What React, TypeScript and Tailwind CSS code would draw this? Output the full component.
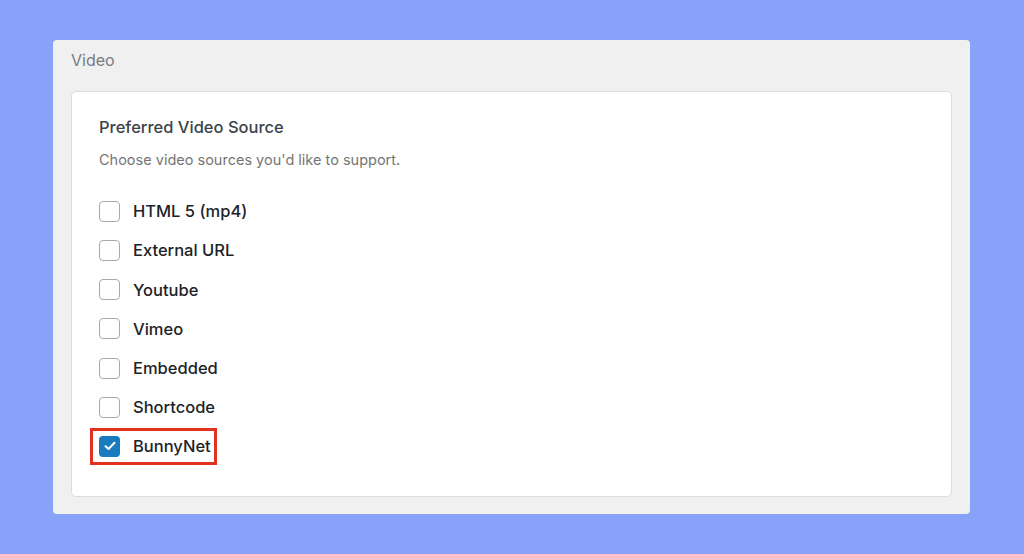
import { useState } from 'react';

const sources = ['HTML 5 (mp4)', 'External URL', 'Youtube', 'Vimeo', 'Embedded', 'Shortcode', 'BunnyNet'];

export default function App() {
  const [checked, setChecked] = useState<string[]>(['BunnyNet']);

  const toggle = (name: string) =>
    setChecked((prev) => (prev.includes(name) ? prev.filter((n) => n !== name) : [...prev, name]));

  return (
    <div
      className="w-[1024px] h-[554px] bg-[#87a2f8] pt-[40px] pl-[53px]"
      style={{ fontFamily: 'Inter, "Liberation Sans", sans-serif' }}
    >
      <div className="w-[917px] h-[474px] bg-[#f0f0f1] rounded-[4px] pt-[10px] px-[18px]">
        <div className="text-[16px] leading-[20px] text-[#787c82] h-[41px]">Video</div>
        <div className="w-[881px] h-[406px] bg-white border border-[#dcdcde] rounded-[5px] pl-[27px] pt-[24px]">
          <h2 className="text-[16.5px] leading-[22px] font-medium text-[#3c434a]">Preferred Video Source</h2>
          <p className="mt-[12px] text-[14.5px] leading-[20px] text-[#757575]">Choose video sources you'd like to support.</p>
          <div className="mt-[31px] flex flex-col gap-[19.3px]">
            {sources.map((s) => {
              const on = checked.includes(s);
              const row = (
                <label className="flex items-center gap-[13px] cursor-pointer h-[20px]" onClick={() => toggle(s)}>
                  <span
                    className={
                      on
                        ? 'w-[21px] h-[21px] rounded-[4px] bg-[#1a7bbf] flex items-center justify-center'
                        : 'w-[21px] h-[21px] rounded-[4px] border border-[#a7aaad] bg-white'
                    }
                  >
                    {on && (
                      <svg width="12" height="10" viewBox="0 0 12 10" fill="none">
                        <path d="M1.5 5.2L4.5 8L10.5 1.8" stroke="white" strokeWidth="2" strokeLinecap="round" strokeLinejoin="round" />
                      </svg>
                    )}
                  </span>
                  <span className="text-[16.5px] leading-[20px] font-medium text-[#1d2327]">{s}</span>
                </label>
              );
              return s === 'BunnyNet' ? (
                <div key={s} className="-ml-[9px] w-[127px] h-[37px] -my-[9px] border-[3px] border-[#e2321f] pl-[6px] flex items-center">
                  {row}
                </div>
              ) : (
                <div key={s}>{row}</div>
              );
            })}
          </div>
        </div>
      </div>
    </div>
  );
}
